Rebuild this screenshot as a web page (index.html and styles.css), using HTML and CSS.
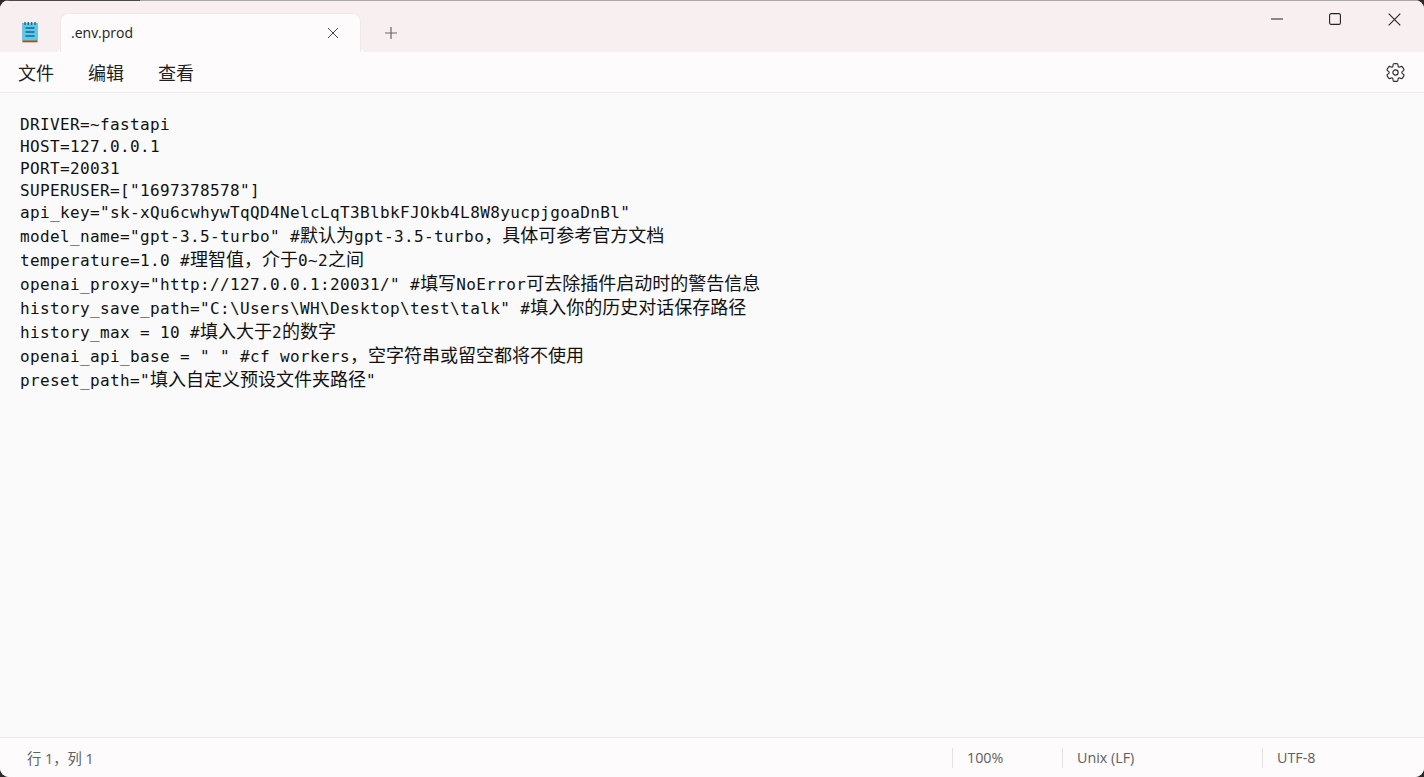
FILE: index.html
```html
<!DOCTYPE html>
<html lang="zh-CN">
<head>
  <meta charset="UTF-8">
  <title>.env.prod - Notepad</title>
  <link rel="stylesheet" href="styles.css">
</head>
<body>
  <div class="window">
    <div class="topline"></div>
    <div class="titlebar">
      <div class="app-icon">
        <svg width="16" height="21" viewBox="0 0 16 21">
          <rect x="0.5" y="1.5" width="15" height="17" fill="#62c6ea"/>
          <rect x="0.5" y="1.5" width="15" height="17" fill="none" stroke="#4fb0d6" stroke-width="0.6"/>
          <path d="M3 0v3M6.3 0v3M9.6 0v3M13 0v3" stroke="#0f6f93" stroke-width="1.4"/>
          <path d="M3.5 6h9M3.5 10h9M3.5 14h9" stroke="#0b6a8e" stroke-width="1.7"/>
          <rect x="0.5" y="18.5" width="15" height="1.8" fill="#a6500e"/>
        </svg>
      </div>
      <div class="tab">
        <span class="tab-title">.env.prod</span>
        <svg class="tab-close" width="12" height="12" viewBox="0 0 12 12"><path d="M1 1l10 10M11 1L1 11" stroke="#444" stroke-width="1"/></svg>
      </div>
      <div class="tab-add">
        <svg width="14" height="14" viewBox="0 0 14 14"><path d="M7 1v12M1 7h12" stroke="#666" stroke-width="1.2"/></svg>
      </div>
      <div class="win-controls">
        <div class="win-btn"><svg width="12" height="12" viewBox="0 0 12 12"><path d="M0 6h12" stroke="#222" stroke-width="1.1"/></svg></div>
        <div class="win-btn win-max"><svg width="12" height="12" viewBox="0 0 12 12"><rect x="0.6" y="0.6" width="10.8" height="10.8" rx="1.5" fill="none" stroke="#222" stroke-width="1.1"/></svg></div>
        <div class="win-btn"><svg width="13" height="13" viewBox="0 0 13 13"><path d="M.7.7l11.6 11.6M12.3.7L.7 12.3" stroke="#222" stroke-width="1.1"/></svg></div>
      </div>
    </div>

    <div class="menubar">
      <span class="menu-item">文件</span>
      <span class="menu-item">编辑</span>
      <span class="menu-item">查看</span>
      <svg class="gear" width="21" height="21" viewBox="0 0 20 20">
        <path d="M1.91 7.38A8.5 8.5 0 0 1 3.7 4.3a.5.5 0 0 1 .54-.13l1.92.68a1 1 0 0 0 1.32-.76l.36-2a.5.5 0 0 1 .4-.4 8.53 8.53 0 0 1 3.55 0c.2.04.35.2.38.4l.37 2a1 1 0 0 0 1.32.76l1.92-.68a.5.5 0 0 1 .54.13 8.5 8.5 0 0 1 1.78 3.08c.06.2 0 .4-.15.54l-1.56 1.32a1 1 0 0 0 0 1.52l1.56 1.32a.5.5 0 0 1 .15.54 8.5 8.5 0 0 1-1.78 3.08.5.5 0 0 1-.54.13l-1.92-.68a1 1 0 0 0-1.32.76l-.37 2a.5.5 0 0 1-.38.4 8.53 8.53 0 0 1-3.56 0 .5.5 0 0 1-.39-.4l-.36-2a1 1 0 0 0-1.32-.76l-1.92.68a.5.5 0 0 1-.54-.13 8.5 8.5 0 0 1-1.78-3.08.5.5 0 0 1 .15-.54l1.56-1.32a1 1 0 0 0 0-1.52L2.06 7.92a.5.5 0 0 1-.15-.54Z" fill="none" stroke="#2b2b2b" stroke-width="1.05"/>
        <circle cx="10" cy="10" r="2.5" fill="none" stroke="#2b2b2b" stroke-width="1.05"/>
      </svg>
    </div>

    <div class="editor">
      <div class="line">DRIVER=~fastapi</div>
      <div class="line">HOST=127.0.0.1</div>
      <div class="line">PORT=20031</div>
      <div class="line">SUPERUSER=["1697378578"]</div>
      <div class="line gap-after">api_key="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"</div>
      <div class="line tall">model_name="gpt-3.5-turbo" #<span class="cn">默认为</span>gpt-3.5-turbo<span class="cn">，具体可参考官方文档</span></div>
      <div class="line tall">temperature=1.0 #<span class="cn">理智值，介于</span>0~2<span class="cn">之间</span></div>
      <div class="line tall">openai_proxy="http://127.0.0.1:20031/" #<span class="cn">填写</span>NoError<span class="cn">可去除插件启动时的警告信息</span></div>
      <div class="line tall">history_save_path="C:\Users\WH\Desktop\test\talk" #<span class="cn">填入你的历史对话保存路径</span></div>
      <div class="line tall">history_max = 10 #<span class="cn">填入大于</span>2<span class="cn">的数字</span></div>
      <div class="line tall">openai_api_base = " " #cf workers<span class="cn">，空字符串或留空都将不使用</span></div>
      <div class="line tall">preset_path="<span class="cn">填入自定义预设文件夹路径</span>"</div>
    </div>

    <div class="statusbar">
      <span class="status-pos">行 1，列 1</span>
      <span class="status-cell cell-zoom">100%</span>
      <span class="status-cell cell-eol">Unix (LF)</span>
      <span class="status-cell cell-enc">UTF-8</span>
    </div>
  </div>
</body>
</html>
```

FILE: styles.css
```css
html, body {
  margin: 0;
  height: 100%;
  background: #2b2b2b;
}
.window {
  height: 777px;
  box-sizing: border-box;
  display: flex;
  flex-direction: column;
  background: #f8f0f0;
  border-radius: 9px;
  overflow: hidden;
  font-family: "Open Sans", "Noto Sans CJK SC", sans-serif;
  color: #222;
}
.topline {
  height: 1px;
  flex-shrink: 0;
  background: linear-gradient(to right, #4a4848 140px, #a9a6a6 140px);
}

/* title bar */
.titlebar {
  height: 51px;
  flex-shrink: 0;
  display: flex;
  align-items: flex-end;
  background: #f8f0f0;
}
.app-icon {
  width: 60px;
  height: 30px;
  padding: 0 0 0 22px;
  box-sizing: border-box;
}
.tab {
  position: relative;
  width: 301px;
  height: 39px;
  box-sizing: border-box;
  display: flex;
  align-items: center;
  justify-content: space-between;
  padding: 0 21px 0 10px;
  background: #fdfbfc;
  border: 1px solid #efe9e9;
  border-bottom: none;
  border-radius: 8px 8px 0 0;
  font-size: 14px;
}
.tab::before, .tab::after {
  content: "";
  position: absolute;
  bottom: 0;
  width: 6px;
  height: 6px;
  background: radial-gradient(circle at 0 0, #f8f0f0 5.5px, #efe9e9 6px, #fdfbfc 6.5px);
}
.tab::before {
  left: -7px;
}
.tab::after {
  right: -7px;
  transform: scaleX(-1);
  transform-origin: center;
}
.tab-title {
  color: #222;
  padding-bottom: 1px;
}
.tab-add {
  width: 60px;
  height: 39px;
  display: flex;
  align-items: center;
  justify-content: center;
}
.win-controls {
  margin-left: auto;
  display: flex;
  align-self: flex-start;
}
.win-btn {
  width: 59px;
  height: 36px;
  display: flex;
  align-items: center;
  justify-content: center;
}
.win-max {
  width: 58px;
  margin-right: 1px;
}

/* menu */
.menubar {
  height: 41px;
  flex-shrink: 0;
  box-sizing: border-box;
  display: flex;
  align-items: center;
  gap: 34px;
  padding: 0 18px 0 18px;
  background: #fdfbfc;
  border-bottom: 1px solid #eeecec;
}
.menu-item {
  font-size: 18px;
  color: #1f1f1f;
}
.gear {
  margin-left: auto;
}

/* text area */
.editor {
  flex: 1;
  padding: 21px 20px 0;
  background: #fafafa;
  font-family: "DejaVu Sans Mono", monospace;
  font-size: 16px;
  letter-spacing: 0.37px;
  color: #111;
}
.line {
  height: 22px;
  line-height: 22px;
  white-space: pre;
}
.line.tall {
  height: 24px;
  line-height: 24px;
}
.gap-after {
  margin-bottom: 1px;
}
.cn {
  font-family: "Noto Sans CJK SC", sans-serif;
  font-size: 18px;
  letter-spacing: 0;
  line-height: 1;
}

/* status */
.statusbar {
  height: 40px;
  flex-shrink: 0;
  box-sizing: border-box;
  display: flex;
  align-items: center;
  padding-left: 27px;
  background: #fdfbfc;
  border-top: 1px solid #eeecec;
  font-size: 14.3px;
  color: #5f5f5f;
}
.status-pos {
  margin-right: auto;
}
.status-cell {
  height: 20px;
  line-height: 20px;
  box-sizing: border-box;
  border-left: 1px solid #e4e2e2;
  padding-left: 14px;
}
.cell-zoom { width: 110px; }
.cell-eol { width: 200px; }
.cell-enc { width: 162px; }
```
